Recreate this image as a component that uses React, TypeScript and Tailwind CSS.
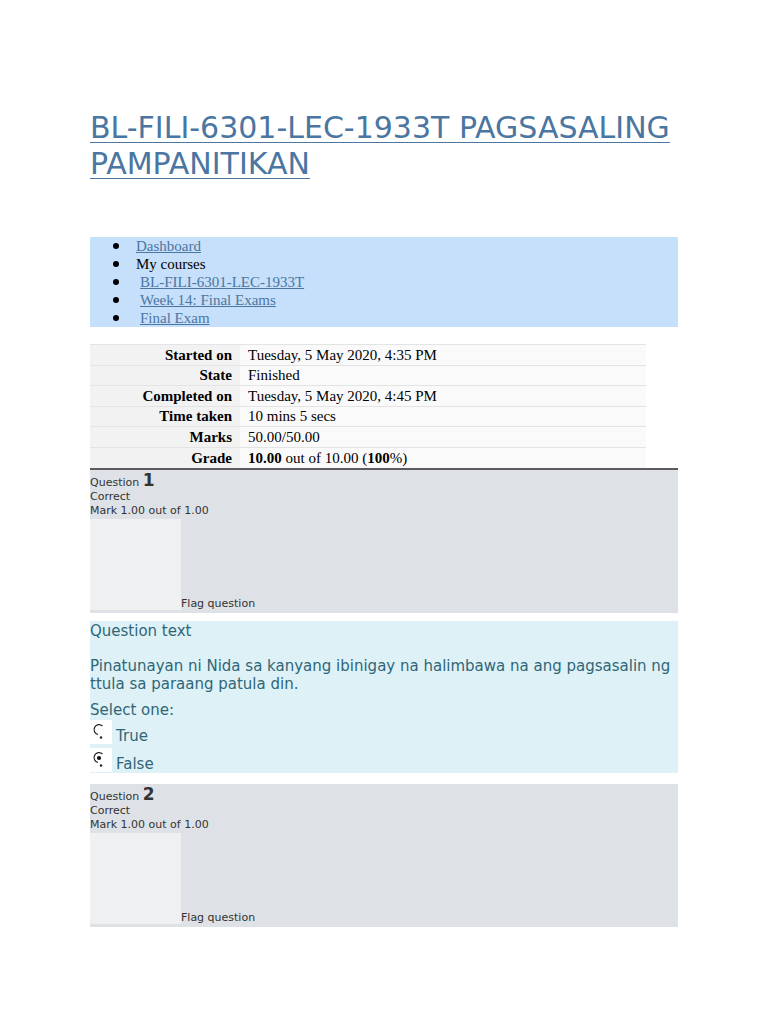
import React from "react";

const sans = { fontFamily: '"DejaVu Sans", Verdana, sans-serif' };
const serif = { fontFamily: '"Liberation Serif", "Times New Roman", serif' };

function Radio({ checked }: { checked?: boolean }) {
  return (
    <span className="inline-block w-[22px] h-[24px] bg-white shrink-0">
      <svg width="22" height="24" viewBox="0 0 22 24">
        <path d="M12.5 6 A5 5 0 1 0 8 14.5" fill="none" stroke="#222" strokeWidth="1.2" />
        <circle cx="11" cy="17.5" r="1.2" fill="#222" />
        {checked && <circle cx="9" cy="10" r="2.1" fill="#111" />}
      </svg>
    </span>
  );
}

function QuestionInfo({ n }: { n: number }) {
  return (
    <div className="bg-[#dee2e6] text-[#333] text-[11px] leading-[14px] pt-[3px] pb-[3px]" style={sans}>
      <div>
        Question <span className="text-[17px] font-bold leading-[14px]">{n}</span>
      </div>
      <div>Correct</div>
      <div>Mark 1.00 out of 1.00</div>
      <div className="flex items-end mt-[1px]">
        <div className="w-[91px] h-[91px] bg-[#eff0f1]" />
        <span className="leading-[12px]">Flag question</span>
      </div>
    </div>
  );
}

function Crumb({ children, indent }: { children: React.ReactNode; indent?: boolean }) {
  return (
    <li className="flex items-center h-[18px]">
      <span className="ml-[23px] w-[6px] h-[6px] rounded-full bg-black shrink-0" />
      <span className={indent ? "ml-[21px]" : "ml-[17px]"}>{children}</span>
    </li>
  );
}

export default function App() {
  const rows: [string, React.ReactNode][] = [
    ["Started on", "Tuesday, 5 May 2020, 4:35 PM"],
    ["State", "Finished"],
    ["Completed on", "Tuesday, 5 May 2020, 4:45 PM"],
    ["Time taken", "10 mins 5 secs"],
    ["Marks", "50.00/50.00"],
    [
      "Grade",
      <>
        <b>10.00</b> out of 10.00 (<b>100</b>%)
      </>,
    ],
  ];

  return (
    <div className="bg-white w-[768px] min-h-[1024px] pl-[90px] pr-[90px] pt-[110px]">
      <h1 className="text-[30px] leading-[36px] text-[#4a76a1] underline decoration-1 underline-offset-[4px]" style={sans}>
        <a href="#">BL-FILI-6301-LEC-1933T PAGSASALING PAMPANITIKAN</a>
      </h1>

      <ul className="mt-[55px] bg-[#c6dffa] text-[15px] leading-[18px] text-black" style={serif}>
        <Crumb><a href="#" className="underline text-[#4a76a1]">Dashboard</a></Crumb>
        <Crumb>My courses</Crumb>
        <Crumb indent><a href="#" className="underline text-[#4a76a1]">BL-FILI-6301-LEC-1933T</a></Crumb>
        <Crumb indent><a href="#" className="underline text-[#4a76a1]">Week 14: Final Exams</a></Crumb>
        <Crumb indent><a href="#" className="underline text-[#4a76a1]">Final Exam</a></Crumb>
      </ul>

      <table className="mt-[17px] w-[556px] text-[15px] text-black border-collapse" style={serif}>
        <tbody>
          {rows.map(([k, v]) => (
            <tr key={k} className="border-t border-[#e4e4e4] h-[20.5px]">
              <th className="w-[150px] bg-[#f2f2f2] text-right pr-[8px] leading-[18px] font-bold p-0">{k}</th>
              <td className="bg-[#fafafa] pl-[8px] leading-[18px] p-0">{v}</td>
            </tr>
          ))}
        </tbody>
      </table>
      <div className="h-[2px] bg-[#5c5c5c]" />

      <QuestionInfo n={1} />

      <div className="mt-[8px] bg-[#def1f7] text-[#2f6677] text-[15px] pb-[1px]" style={sans}>
        <div className="leading-[20px]">Question text</div>
        <p className="mt-[16px] leading-[18px]">
          Pinatunayan ni Nida sa kanyang ibinigay na halimbawa na ang pagsasalin ng ttula sa paraang patula din.
        </p>
        <div className="mt-[7px] leading-[20px]">Select one:</div>
        <div className="flex items-end">
          <Radio />
          <span className="ml-[4px] leading-[16px]">True</span>
        </div>
        <div className="mt-[4px] flex items-end">
          <Radio checked />
          <span className="ml-[4px] leading-[16px]">False</span>
        </div>
      </div>

      <div className="mt-[11px]">
        <QuestionInfo n={2} />
      </div>
    </div>
  );
}
